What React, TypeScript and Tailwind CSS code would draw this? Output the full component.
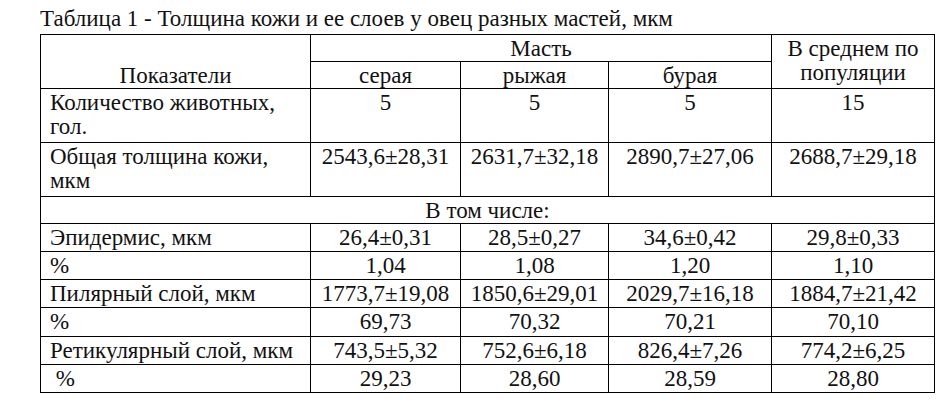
import React from 'react';

type Row = {
  label: string;
  values: string[];
  h: string;
};

const rows: Row[] = [
  { label: 'Количество животных, гол.', values: ['5', '5', '5', '15'], h: 'h-[54px]' },
  { label: 'Общая толщина кожи, мкм', values: ['2543,6±28,31', '2631,7±32,18', '2890,7±27,06', '2688,7±29,18'], h: 'h-[54px]' },
];

const layers: Row[] = [
  { label: 'Эпидермис, мкм', values: ['26,4±0,31', '28,5±0,27', '34,6±0,42', '29,8±0,33'], h: 'h-[28px]' },
  { label: '%', values: ['1,04', '1,08', '1,20', '1,10'], h: 'h-[28px]' },
  { label: 'Пилярный слой, мкм', values: ['1773,7±19,08', '1850,6±29,01', '2029,7±16,18', '1884,7±21,42'], h: 'h-[28px]' },
  { label: '%', values: ['69,73', '70,32', '70,21', '70,10'], h: 'h-[29px]' },
  { label: 'Ретикулярный слой, мкм', values: ['743,5±5,32', '752,6±6,18', '826,4±7,26', '774,2±6,25'], h: 'h-[28px]' },
  { label: '\u00a0%', values: ['29,23', '28,60', '28,59', '28,80'], h: 'h-[28px]' },
];

const cell = 'border border-black align-top pt-[2px] pb-0';

function DataRow({ row }: { row: Row }) {
  return (
    <tr className={row.h}>
      <td className={`${cell} pl-[9px] pr-1 text-left`}>{row.label}</td>
      {row.values.map((v, i) => (
        <td key={i} className={`${cell} px-0 text-center`}>
          {v}
        </td>
      ))}
    </tr>
  );
}

export default function App() {
  return (
    <div className="w-[944px] h-[407px] bg-white text-[#111] text-[23px] leading-[24px] overflow-hidden font-['Liberation_Serif','Times_New_Roman',serif]">
      <div className="pl-[40px] pt-[7px] h-[34px] whitespace-nowrap">
        Таблица 1 - Толщина кожи и ее слоев у овец разных мастей, мкм
      </div>

      {/* Table */}
      <table className="ml-[40px] w-[894px] table-fixed border-collapse">
        <colgroup>
          <col className="w-[270px]" />
          <col className="w-[150px]" />
          <col className="w-[148px]" />
          <col className="w-[163px]" />
          <col className="w-[163px]" />
        </colgroup>
        <tbody>
          <tr className="h-[27px]">
            <td rowSpan={2} className="border border-black align-bottom text-center pb-0">
              Показатели
            </td>
            <td colSpan={3} className={`${cell} text-center`}>
              Масть
            </td>
            <td rowSpan={2} className={`${cell} text-center`}>
              В среднем по популяции
            </td>
          </tr>
          <tr className="h-[27px]">
            <td className={`${cell} text-center`}>серая</td>
            <td className={`${cell} text-center`}>рыжая</td>
            <td className={`${cell} text-center`}>бурая</td>
          </tr>
          {rows.map((r, i) => (
            <DataRow key={i} row={r} />
          ))}
          <tr className="h-[27px]">
            <td colSpan={5} className={`${cell} text-center`}>
              В том числе:
            </td>
          </tr>
          {layers.map((r, i) => (
            <DataRow key={i} row={r} />
          ))}
        </tbody>
      </table>
    </div>
  );
}
